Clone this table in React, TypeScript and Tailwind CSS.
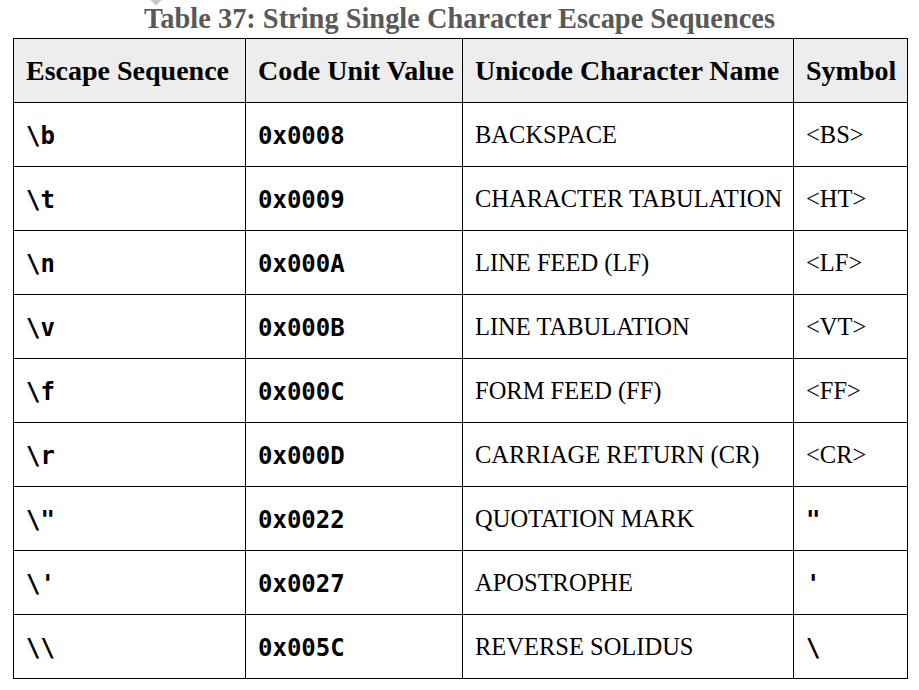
import React from "react";

const rows: [string, string, string, string][] = [
  ["\\b", "0x0008", "BACKSPACE", "<BS>"],
  ["\\t", "0x0009", "CHARACTER TABULATION", "<HT>"],
  ["\\n", "0x000A", "LINE FEED (LF)", "<LF>"],
  ["\\v", "0x000B", "LINE TABULATION", "<VT>"],
  ["\\f", "0x000C", "FORM FEED (FF)", "<FF>"],
  ["\\r", "0x000D", "CARRIAGE RETURN (CR)", "<CR>"],
  ['\\"', "0x0022", "QUOTATION MARK", '"'],
  ["\\'", "0x0027", "APOSTROPHE", "'"],
  ["\\\\", "0x005C", "REVERSE SOLIDUS", "\\"],
];

const serif = "font-['Liberation_Serif','Times_New_Roman',serif]";
const mono = "font-['DejaVu_Sans_Mono','Liberation_Mono',monospace]";

export default function App() {
  return (
    <div className="w-[919px] h-[690px] bg-white relative overflow-hidden">
      <div className="absolute left-[152px] top-[-4px] w-[8px] h-[8px] rotate-45 bg-[#c8c8c8]" />
      <div className={`${serif} h-[38px] flex items-center justify-center font-bold text-[28.4px] text-[#595959] leading-none pt-[1px]`}>
        Table 37: String Single Character Escape Sequences
      </div>
      <div className="ml-[13px] w-[895px] border border-black grid grid-cols-[232px_217px_331px_1fr] text-black">
        {["Escape Sequence", "Code Unit Value", "Unicode Character Name", "Symbol"].map((h, i) => (
          <div
            key={h}
            className={`${serif} h-[63px] bg-[#ededed] flex items-center pl-[12px] pt-[1px] font-bold text-[28px] whitespace-nowrap ${i < 3 ? "border-r border-black" : ""}`}
          >
            {h}
          </div>
        ))}
        {rows.map((r, ri) =>
          r.map((c, ci) => (
            <div
              key={`${ri}-${ci}`}
              className={`h-[64px] flex items-center pl-[12px] pt-[2px] border-t border-black whitespace-nowrap ${ci < 3 ? "border-r" : ""} ${
                ci < 2 ? `${mono} font-bold text-[24px]` : ci === 3 && ri >= 6 ? `${mono} font-bold text-[24px]` : `${serif} text-[24.5px]`
              }`}
            >
              {c}
            </div>
          ))
        )}
      </div>
    </div>
  );
}
